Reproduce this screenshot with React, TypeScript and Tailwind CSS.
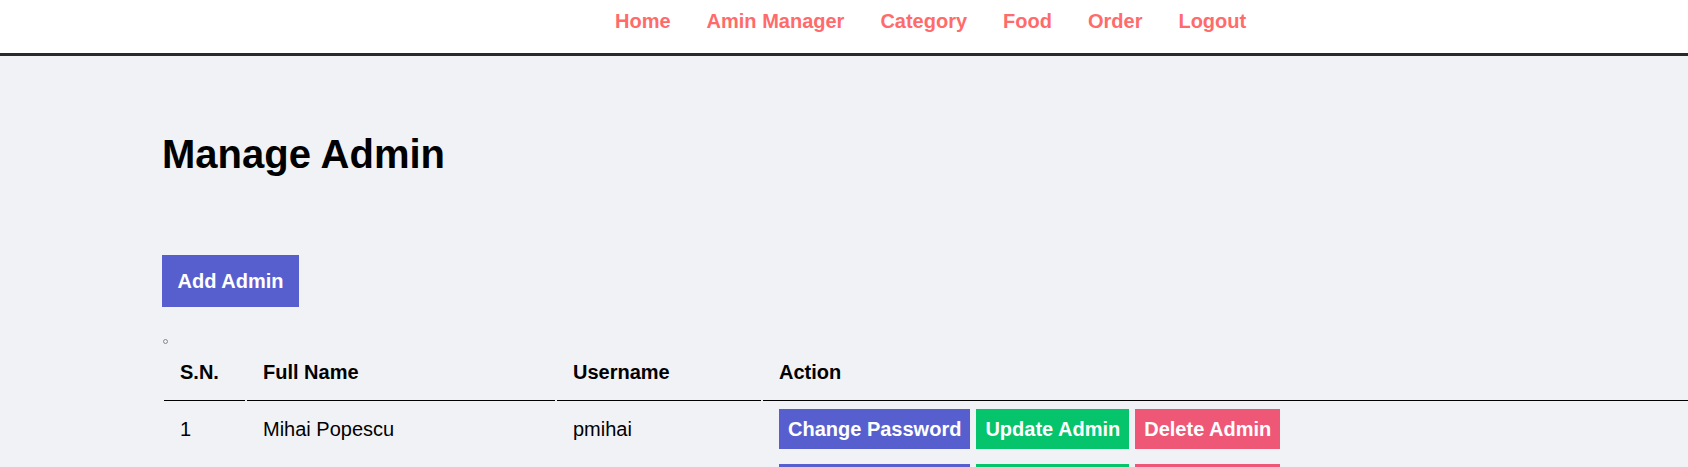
import React from "react";

const navItems = ["Home", "Amin Manager", "Category", "Food", "Order", "Logout"];

const rows = [
  { sn: 1, name: "Mihai Popescu", user: "pmihai" },
  { sn: 2, name: "Andrei Ionescu", user: "iandrei" },
];

export default function App() {
  return (
    <div
      className="w-full min-h-[467px] overflow-hidden bg-[#f1f2f6] text-[20px] text-black"
      style={{ fontFamily: '"Liberation Sans", Arial, sans-serif' }}
    >
      <header className="h-[56px] bg-white border-b-[3px] border-[#2d2828]">
        <nav className="flex gap-[36px] pl-[615px] pt-[10px]">
          {navItems.map((n) => (
            <a key={n} className="font-bold text-[#ff6b6b] leading-[23px] whitespace-nowrap">
              {n}
            </a>
          ))}
        </nav>
      </header>

      <main className="pl-[162px] pt-[75px] pb-[40px]">
        <h1 className="text-[40px] font-bold leading-[46px]">Manage Admin</h1>

        <button className="mt-[78px] h-[52px] w-[137px] bg-[#575fcf] text-white font-bold leading-[23px] flex items-center justify-center">
          Add Admin
        </button>

        <div className="mt-[32px] h-[4px] flex items-start">
          <span className="block w-[5px] h-[5px] ml-[1px] rounded-full border border-[#888]" />
        </div>

        <table className="w-[1600px] table-fixed border-separate border-spacing-[2px] text-left">
          <thead>
            <tr>
              <th className="w-[81px] px-[16px] py-[16px] leading-[23px] font-bold border-b border-black">S.N.</th>
              <th className="w-[308px] px-[16px] py-[16px] leading-[23px] font-bold border-b border-black">Full Name</th>
              <th className="w-[204px] px-[16px] py-[16px] leading-[23px] font-bold border-b border-black">Username</th>
              <th className="px-[16px] py-[16px] leading-[23px] font-bold border-b border-black">Action</th>
            </tr>
          </thead>
          <tbody>
            {rows.map((r) => (
              <tr key={r.sn}>
                <td className="px-[16px] pt-[6px] pb-[7px] leading-[23px] align-middle">{r.sn}</td>
                <td className="px-[16px] pt-[6px] pb-[7px] leading-[23px] align-middle">{r.name}</td>
                <td className="px-[16px] pt-[6px] pb-[7px] leading-[23px] align-middle">{r.user}</td>
                <td className="px-[16px] pt-[6px] pb-[7px] leading-[23px] align-middle">
                  <div className="flex gap-[6px]">
                    <a className="h-[40px] px-[9px] flex items-center bg-[#575fcf] text-white font-bold whitespace-nowrap">
                      Change Password
                    </a>
                    <a className="h-[40px] px-[9px] flex items-center bg-[#05c46b] text-white font-bold whitespace-nowrap">
                      Update Admin
                    </a>
                    <a className="h-[40px] px-[9px] flex items-center bg-[#ef5777] text-white font-bold whitespace-nowrap">
                      Delete Admin
                    </a>
                  </div>
                </td>
              </tr>
            ))}
          </tbody>
        </table>
      </main>
    </div>
  );
}
